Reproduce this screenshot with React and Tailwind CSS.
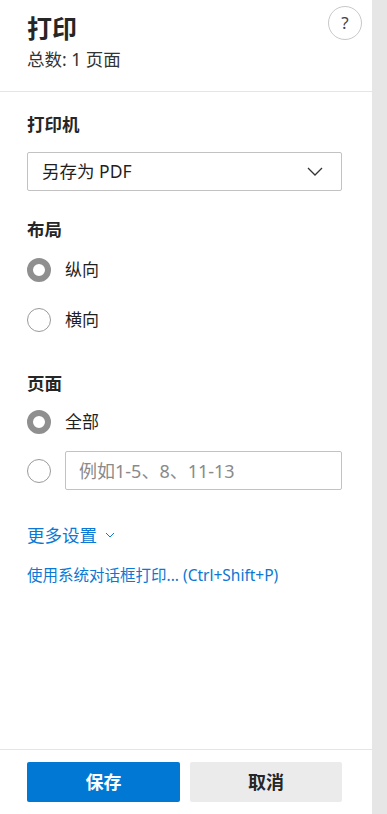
import { useState } from 'react';

const font = { fontFamily: '"Noto Sans", "Noto Sans CJK SC", sans-serif' };

function Radio({ checked, onClick }) {
  return (
    <button
      onClick={onClick}
      className={`w-6 h-6 rounded-full shrink-0 bg-white ${
        checked ? 'border-[6px] border-[#8f8f8f]' : 'border border-[#9a9a9a]'
      }`}
    />
  );
}

export default function App() {
  const [layout, setLayout] = useState('portrait');
  const [pages, setPages] = useState('all');

  return (
    <div className="flex w-[387px] h-[814px] bg-[#e6e6e6] text-[#1f1f1f] font-['Noto_Sans','Noto_Sans_CJK_SC',sans-serif]">
      <div className="w-[372px] h-full bg-white flex flex-col">
        {/* Header */}
        <div className="relative px-[27px] pt-[10px] h-[92px] border-b border-[#e5e5e5]">
          <h1 className="text-[25px] font-bold leading-[36px] text-[#262626]">打印</h1>
          <p className="text-[17.5px] leading-[26px] text-[#333]">总数: 1 页面</p>
          <button className="absolute right-[10px] top-[6px] w-[34px] h-[34px] rounded-full border border-[#c8c8c8] flex items-center justify-center text-[17px] text-[#444]">
            ?
          </button>
        </div>

        {/* Body */}
        <div className="flex-1 px-[27px] pt-[20px]">
          <h2 className="text-[17.5px] font-bold leading-[24px] text-[#262626]">打印机</h2>
          <button className="mt-[16px] w-[315px] h-[39px] border border-[#c2c2c2] rounded-[2px] flex items-center justify-between pl-[14px] pr-[18px] text-[17.5px]">
            <span>另存为 PDF</span>
            <svg width="16" height="9" viewBox="0 0 16 9" fill="none" stroke="#333" strokeWidth="1.3">
              <path d="M1 1l7 7 7-7" />
            </svg>
          </button>

          <h2 className="mt-[26px] text-[17.5px] font-bold leading-[24px] text-[#262626]">布局</h2>
          <div className="mt-[17px] flex items-center gap-[14px] h-[24px]">
            <Radio checked={layout === 'portrait'} onClick={() => setLayout('portrait')} />
            <span className="text-[17px]">纵向</span>
          </div>
          <div className="mt-[26px] flex items-center gap-[14px] h-[24px]">
            <Radio checked={layout === 'landscape'} onClick={() => setLayout('landscape')} />
            <span className="text-[17px]">横向</span>
          </div>

          <h2 className="mt-[39px] text-[17.5px] font-bold leading-[24px] text-[#262626]">页面</h2>
          <div className="mt-[15px] flex items-center gap-[14px] h-[24px]">
            <Radio checked={pages === 'all'} onClick={() => setPages('all')} />
            <span className="text-[17px]">全部</span>
          </div>
          <div className="mt-[17px] flex items-center gap-[14px]">
            <Radio checked={pages === 'custom'} onClick={() => setPages('custom')} />
            <input
              placeholder="例如1-5、8、11-13"
              className="w-[277px] h-[39px] border border-[#c2c2c2] rounded-[2px] px-[13px] text-[18px] placeholder-[#8a8a8a] outline-none"
              style={font}
            />
          </div>

          <button className="mt-[32px] flex items-center gap-[8px] text-[17.5px] text-[#0a78d4]">
            更多设置
            <svg width="10" height="6" viewBox="0 0 10 6" fill="none" stroke="#0a78d4" strokeWidth="1">
              <path d="M1 1l4 4 4-4" />
            </svg>
          </button>
          <button className="mt-[16px] block text-[15.5px] text-[#0a78d4]">
            使用系统对话框打印... (Ctrl+Shift+P)
          </button>
        </div>

        {/* Footer */}
        <div className="border-t border-[#e5e5e5] h-[65px] px-[27px] flex items-center gap-[10px]">
          <button className="w-[153px] h-[40px] rounded-[2px] bg-[#0078d4] text-white text-[18px] font-bold">
            保存
          </button>
          <button className="w-[152px] h-[40px] rounded-[2px] bg-[#ebebeb] text-[#262626] text-[18px] font-bold">
            取消
          </button>
        </div>
      </div>
    </div>
  );
}
